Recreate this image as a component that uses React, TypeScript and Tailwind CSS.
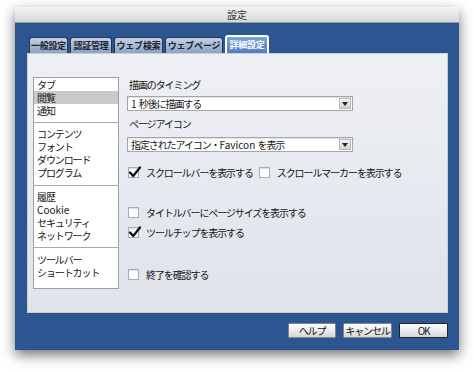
import React from "react";

const JP = "font-['Noto_Sans_CJK_JP','Noto_Sans',sans-serif]";

function Check({ checked }: { checked?: boolean }) {
  return (
    <div className="relative w-[11px] h-[11px] shrink-0 bg-white border border-[#a9acb2] shadow-[inset_0_1px_1px_rgba(0,0,0,0.15)]">
      {checked && (
        <svg className="absolute -left-[1px] -top-[3px]" width="14" height="14" viewBox="0 0 14 14">
          <path d="M2 7.5 L5.2 11 L12 2.5" fill="none" stroke="#111" strokeWidth="2.3" strokeLinecap="round" strokeLinejoin="round" />
        </svg>
      )}
    </div>
  );
}

function Select({ text }: { text: React.ReactNode }) {
  return (
    <div className="w-[226px] h-[15px] flex items-center bg-white border border-[#a3a6ad] shadow-[inset_0_1px_1px_rgba(0,0,0,0.12)]">
      <div className="flex-1 pl-[3px] leading-[13px]">{text}</div>
      <div className="w-[12px] h-[11px] mr-[1px] flex items-center justify-center bg-gradient-to-b from-[#f4f4f4] to-[#d3d3d3] border border-[#b7b7b7]">
        <svg width="6" height="4" viewBox="0 0 6 4">
          <path d="M0 0 L6 0 L3 4 Z" fill="#222" />
        </svg>
      </div>
    </div>
  );
}

function Tab({ label, w, active }: { label: string; w: string; active?: boolean }) {
  if (active) {
    return (
      <div className={`${w} h-[18px] flex items-center justify-center rounded-t-[3px] border-2 border-b-0 border-white bg-gradient-to-b from-[#7aa4dc] to-[#4f7fc2] text-white font-bold text-[9px] tracking-[-0.2px]`}>
        {label}
      </div>
    );
  }
  return (
    <div className={`${w} h-[16px] flex items-center justify-center rounded-t-[3px] border border-b-0 border-[#1d3558] bg-gradient-to-b from-[#c4d1e3] to-[#8ea3c2] text-[#1b2433] font-bold text-[9px] tracking-[-0.2px]`}>
      {label}
    </div>
  );
}

function Row({ children, hl }: { children: React.ReactNode; hl?: boolean }) {
  return <div className={`h-[13px] leading-[13px] pl-[3px] ${hl ? "bg-[#c9c9c9]" : ""}`}>{children}</div>;
}

function Btn({ label, w, def }: { label: string; w: string; def?: boolean }) {
  return (
    <div
      className={`${w} h-[15px] flex items-center justify-center rounded-[1px] bg-gradient-to-b from-[#ffffff] to-[#d6d6d6] border ${
        def ? "border-[#222]" : "border-[#7d8590]"
      } text-[#111]`}
    >
      {label}
    </div>
  );
}

export default function App() {
  return (
    <div className={`w-[474px] h-[372px] bg-white overflow-hidden ${JP} text-[10px] tracking-[-1.1px] text-[#161616]`}>
      <div className="ml-[15px] mt-[7px] w-[444px] h-[343px] flex flex-col shadow-[0_5px_12px_rgba(0,0,0,0.55)]">
        {/* title bar */}
        <div className="h-[16px] flex items-center justify-center bg-gradient-to-b from-[#f3f3f3] to-[#d8d8d8] border-b border-[#9a9a9a] text-[#333] tracking-normal">
          設定
        </div>
        {/* body */}
        <div className="flex-1 flex flex-col pl-[12px] pr-[11px] pt-[12px] bg-[#2b5590] bg-[repeating-linear-gradient(0deg,#2a538d_0px,#2a538d_1px,#2e5995_1px,#2e5995_2px)]">
          {/* tabs */}
          <div className="h-[18px] pl-[2px] flex items-end gap-[2px]">
            <Tab label="一般設定" w="w-[39px]" />
            <Tab label="認証管理" w="w-[42px]" />
            <Tab label="ウェブ検索" w="w-[49px]" />
            <Tab label="ウェブページ" w="w-[58px]" />
            <Tab label="詳細設定" w="w-[44px]" active />
          </div>
          {/* panel */}
          <div className="h-[260px] flex bg-gradient-to-b from-[#eef0f4] to-[#dfe3ea] border border-[#c9ced8]">
            {/* list */}
            <div className="ml-[5px] mt-[23px] w-[86px] h-[212px] bg-white border border-[#9da1a8] flex flex-col">
              <div className="pt-[0px] pb-[5px]">
                <Row>タブ</Row>
                <Row hl>閲覧</Row>
                <Row>通知</Row>
              </div>
              <div className="border-t border-[#a5a8ae] pt-[4px] pb-[6px]">
                <Row>コンテンツ</Row>
                <Row>フォント</Row>
                <Row>ダウンロード</Row>
                <Row>プログラム</Row>
              </div>
              <div className="border-t border-[#a5a8ae] pt-[4px] pb-[5px]">
                <Row>履歴</Row>
                <Row>
                  <span className="tracking-normal">Cookie</span>
                </Row>
                <Row>セキュリティ</Row>
                <Row>ネットワーク</Row>
              </div>
              <div className="border-t border-[#a5a8ae] pt-[5px]">
                <Row>ツールバー</Row>
                <Row>ショートカット</Row>
              </div>
            </div>
            {/* right column */}
            <div className="ml-[8px] pt-[24px] flex flex-col">
              <div className="h-[13px] leading-[13px] pl-[2px]">描画のタイミング</div>
              <div className="mt-[5px]">
                <Select
                  text={
                    <>
                      <span className="tracking-normal">1 </span>秒後に描画する
                    </>
                  }
                />
              </div>
              <div className="mt-[6px] h-[13px] leading-[13px] pl-[2px]">ページアイコン</div>
              <div className="mt-[7px]">
                <Select
                  text={
                    <>
                      指定されたアイコン・<span className="tracking-normal">Favicon </span>を表示
                    </>
                  }
                />
              </div>
              <div className="mt-[14px] h-[13px] flex items-center pl-[1px]">
                <Check checked />
                <span className="ml-[7px]">スクロールバーを表示する</span>
                <div className="ml-[6px]">
                  <Check />
                </div>
                <span className="ml-[7px]">スクロールマーカーを表示する</span>
              </div>
              <div className="mt-[27px] h-[13px] flex items-center pl-[1px]">
                <Check />
                <span className="ml-[7px]">タイトルバーにページサイズを表示する</span>
              </div>
              <div className="mt-[7px] h-[13px] flex items-center pl-[1px]">
                <Check checked />
                <span className="ml-[7px]">ツールチップを表示する</span>
              </div>
              <div className="mt-[29px] h-[13px] flex items-center pl-[1px]">
                <Check />
                <span className="ml-[7px]">終了を確認する</span>
              </div>
            </div>
          </div>
          {/* buttons */}
          <div className="mt-[10px] flex justify-end gap-[7px]">
            <Btn label="ヘルプ" w="w-[48px]" />
            <Btn label="キャンセル" w="w-[49px]" />
            <Btn label="OK" w="w-[49px]" def />
          </div>
        </div>
      </div>
    </div>
  );
}
